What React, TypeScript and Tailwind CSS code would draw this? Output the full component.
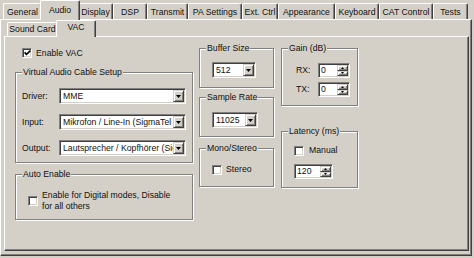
import React from "react";

const font = "font-['Liberation_Sans',Arial,sans-serif] text-[8.7px] leading-[11px] text-[#111]";
const sunken =
  "bg-white border border-t-[#808080] border-l-[#808080] border-r-white border-b-white shadow-[inset_1px_1px_0_#404040,inset_-1px_-1px_0_#d4d0c8]";
const raisedBtn =
  "bg-[#d4d0c8] border border-t-[#d4d0c8] border-l-[#d4d0c8] border-r-[#404040] border-b-[#404040] shadow-[inset_1px_1px_0_#fff,inset_-1px_-1px_0_#808080]";

function Tab({ label, w, selected }: { label: string; w: string; selected?: boolean }) {
  if (selected) {
    return (
      <div
        className={`relative z-10 -mx-[2px] -mb-[1px] flex h-[20px] items-center justify-center rounded-t-[2px] border-l border-t border-r border-l-white border-t-white border-r-[#404040] bg-[#d4d0c8] shadow-[inset_-1px_0_0_#808080] ${w}`}
      >
        {label}
      </div>
    );
  }
  return (
    <div
      className={`flex h-[16px] items-center justify-center rounded-t-[2px] border-l border-t border-r border-l-white border-t-white border-r-[#404040] bg-[#d4d0c8] pt-[1px] shadow-[inset_-1px_0_0_#808080] ${w}`}
    >
      {label}
    </div>
  );
}

function InnerTab({ label, w, selected }: { label: string; w: string; selected?: boolean }) {
  if (selected) {
    return (
      <div
        className={`relative z-10 -mx-[2px] -mb-[1px] flex h-[17px] items-center justify-center rounded-t-[2px] border-l border-t border-r border-l-white border-t-white border-r-[#404040] bg-[#d4d0c8] pb-[3px] shadow-[inset_-1px_0_0_#808080] ${w}`}
      >
        {label}
      </div>
    );
  }
  return (
    <div
      className={`flex h-[14px] items-center justify-center rounded-t-[2px] border-l border-t border-r border-l-white border-t-white border-r-[#404040] bg-[#d4d0c8] shadow-[inset_-1px_0_0_#808080] ${w}`}
    >
      {label}
    </div>
  );
}

function Group({ title, className, children }: { title: string; className: string; children?: React.ReactNode }) {
  return (
    <div className={`relative border border-[#808080] shadow-[inset_1px_1px_0_#fff,1px_1px_0_#fff] ${className}`}>
      <span className="absolute -top-[6px] left-[6px] whitespace-nowrap bg-[#d4d0c8] px-[1px] leading-[11px]">
        {title}
      </span>
      {children}
    </div>
  );
}

function DownArrow() {
  return (
    <svg width="5" height="3" viewBox="0 0 5 3">
      <path d="M0 0H5L2.5 3Z" fill="#000" />
    </svg>
  );
}

function Combo({ text, w }: { text: string; w: string }) {
  return (
    <div className={`flex h-[16px] p-[1px] ${sunken} ${w}`}>
      <div className="flex min-w-0 flex-1 items-center overflow-hidden whitespace-nowrap pl-[2px]">{text}</div>
      <div className={`flex h-full w-[11px] shrink-0 items-center justify-center ${raisedBtn}`}>
        <DownArrow />
      </div>
    </div>
  );
}

function Spin({ value, w }: { value: string; w: string }) {
  return (
    <div className={`flex h-[15px] p-[1px] ${sunken} ${w}`}>
      <div className="flex flex-1 items-center overflow-hidden pl-[1px]">{value}</div>
      <div className="flex h-full w-[11px] flex-col">
        <div className={`flex flex-1 items-center justify-center ${raisedBtn}`}>
          <svg width="3" height="2" viewBox="0 0 3 2">
            <path d="M0 2H3L1.5 0Z" fill="#000" />
          </svg>
        </div>
        <div className={`flex flex-1 items-center justify-center ${raisedBtn}`}>
          <svg width="3" height="2" viewBox="0 0 3 2">
            <path d="M0 0H3L1.5 2Z" fill="#000" />
          </svg>
        </div>
      </div>
    </div>
  );
}

function Check({ checked }: { checked?: boolean }) {
  return (
    <div className={`flex h-[10px] w-[10px] shrink-0 items-center justify-center ${sunken}`}>
      {checked && (
        <svg width="7" height="6" viewBox="0 0 7 6">
          <path d="M0.6 2.4L2.5 4.4L6.4 0.6" stroke="#000" strokeWidth="1.6" fill="none" />
        </svg>
      )}
    </div>
  );
}

export default function App() {
  return (
    <div className={`h-[258px] w-[474px] overflow-hidden bg-[#d4d0c8] ${font}`}>
      <div className="w-[472px]">
        {/* Outer tabs */}
        <div className="flex h-[19px] items-end pl-[3px]">
          <Tab label="General" w="w-[39px]" />
          <Tab label="Audio" w="w-[40px]" selected />
          <Tab label="Display" w="w-[35px]" />
          <Tab label="DSP" w="w-[34px]" />
          <Tab label="Transmit" w="w-[41px]" />
          <Tab label="PA Settings" w="w-[54px]" />
          <Tab label="Ext. Ctrl" w="w-[36px]" />
          <Tab label="Appearance" w="w-[57px]" />
          <Tab label="Keyboard" w="w-[44px]" />
          <Tab label="CAT Control" w="w-[54px]" />
          <Tab label="Tests" w="w-[35px]" />
        </div>
        {/* Outer page */}
        <div className="h-[237px] border border-t-white border-l-white border-r-[#404040] border-b-[#404040] pl-[3px] shadow-[inset_-1px_-1px_0_#808080]">
          <div className="w-[465px]">
            <div className="flex h-[16px] items-end pl-[3px]">
              <InnerTab label="Sound Card" w="w-[51px]" />
              <InnerTab label="VAC" w="w-[40px]" selected />
            </div>
            <div className="flex h-[215px] border border-t-white border-l-white border-r-[#404040] border-b-[#404040] pl-[10px] pt-[11px] shadow-[inset_-1px_-1px_0_#808080]">
              {/* Left column */}
              <div className="flex w-[178px] flex-col">
                <div className="ml-[7px] flex h-[10px] items-center gap-[4px]">
                  <Check checked />
                  <span>Enable VAC</span>
                </div>
                <Group title="Virtual Audio Cable Setup" className="mt-[14px] h-[91px] pl-[6px] pt-[15px]">
                  <div className="flex flex-col gap-[10px]">
                    <div className="flex items-center">
                      <span className="w-[37px]">Driver:</span>
                      <Combo text="MME" w="w-[127px]" />
                    </div>
                    <div className="flex items-center">
                      <span className="w-[37px]">Input:</span>
                      <Combo text="Mikrofon / Line-In (SigmaTel" w="w-[127px]" />
                    </div>
                    <div className="flex items-center">
                      <span className="w-[37px]">Output:</span>
                      <Combo text="Lautsprecher / Kopfhörer (Sig" w="w-[127px]" />
                    </div>
                  </div>
                </Group>
                <Group title="Auto Enable" className="mt-[11px] h-[46px] pl-[12px] pt-[15px]">
                  <div className="flex items-center gap-[4px]">
                    <Check />
                    <span className="leading-[11px]">
                      Enable for Digital modes, Disable
                      <br />
                      for all others
                    </span>
                  </div>
                </Group>
              </div>
              {/* Middle column */}
              <div className="ml-[6px] flex w-[75px] flex-col">
                <Group title="Buffer Size" className="h-[40px] pl-[12px] pt-[13px]">
                  <Combo text="512" w="w-[44px]" />
                </Group>
                <Group title="Sample Rate" className="mt-[9px] h-[40px] pl-[12px] pt-[14px]">
                  <Combo text="11025" w="w-[46px]" />
                </Group>
                <Group title="Mono/Stereo" className="mt-[11px] h-[39px] pl-[12px] pt-[15px]">
                  <div className="flex items-center gap-[4px]">
                    <Check />
                    <span>Stereo</span>
                  </div>
                </Group>
              </div>
              {/* Right column */}
              <div className="ml-[7px] flex w-[77px] flex-col">
                <Group title="Gain (dB)" className="h-[58px] pl-[14px] pt-[14px]">
                  <div className="flex flex-col gap-[4px]">
                    <div className="flex items-center">
                      <span className="w-[22px]">RX:</span>
                      <Spin value="0" w="w-[32px]" />
                    </div>
                    <div className="flex items-center">
                      <span className="w-[22px]">TX:</span>
                      <Spin value="0" w="w-[32px]" />
                    </div>
                  </div>
                </Group>
                <Group title="Latency (ms)" className="mt-[25px] h-[57px] pl-[12px] pt-[13px]">
                  <div className="flex items-center gap-[5px]">
                    <Check />
                    <span>Manual</span>
                  </div>
                  <div className="mt-[8px]">
                    <Spin value="120" w="w-[39px]" />
                  </div>
                </Group>
              </div>
            </div>
          </div>
        </div>
      </div>
    </div>
  );
}
